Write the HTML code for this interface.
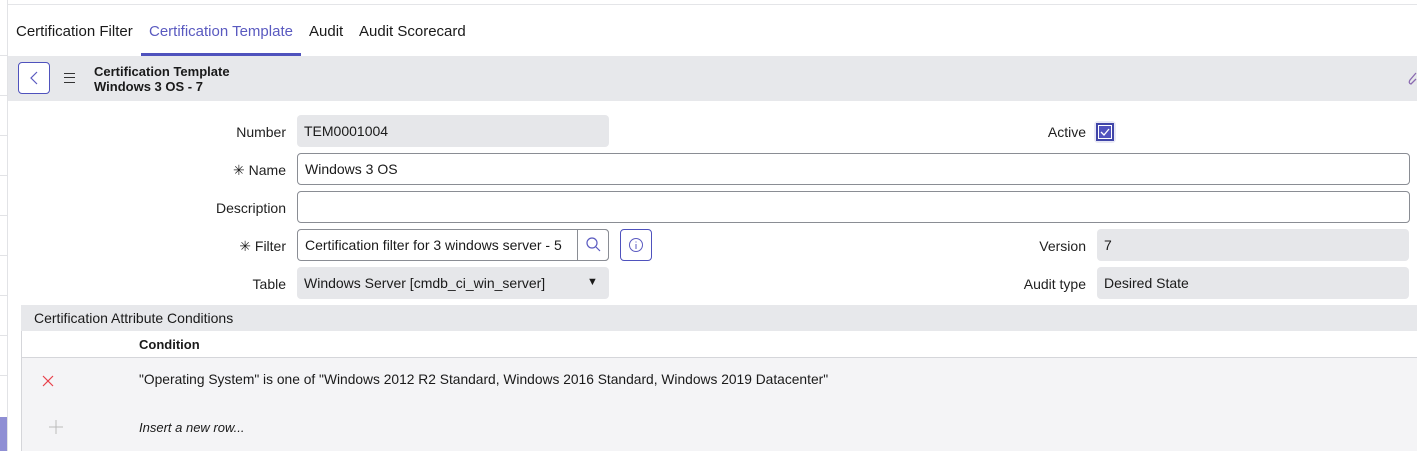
<!DOCTYPE html>
<html><head><style>
body{margin:0;width:1417px;height:451px;overflow:hidden;background:#fff;font-family:"Liberation Sans",sans-serif;position:relative;color:#1a1a1a}
.a{position:absolute}
.lbl{position:absolute;font-size:14px;text-align:right;color:#1f1f1f}
.in{position:absolute;box-sizing:border-box;border-radius:4px;font-size:14px;padding:0 7px;display:flex;align-items:center}
.ro{background:#e6e7ea}
.ed{border:1px solid #8a8d94;background:#fff}
.ln{position:absolute;left:0;width:7px;height:1px;background:#e2e3e6}
</style></head><body>
<div class="a" style="left:7px;top:0;width:1410px;height:4px;border-bottom:1px solid #e4e5e8"></div>
<div class="a" style="left:0;top:0;width:7px;height:451px;border-right:1px solid #e2e3e6;background:#fff"></div>
<div class="ln" style="top:55px"></div><div class="ln" style="top:95px"></div><div class="ln" style="top:135px"></div><div class="ln" style="top:175px"></div><div class="ln" style="top:215px"></div><div class="ln" style="top:255px"></div><div class="ln" style="top:295px"></div><div class="ln" style="top:335px"></div><div class="ln" style="top:375px"></div>
<div class="a" style="left:0;top:417px;width:7px;height:34px;background:#8f8fd4"></div>

<div class="a" style="left:16px;top:23px;font-size:15px">Certification Filter</div>
<div class="a" style="left:149px;top:23px;font-size:15px;color:#5a5ac0">Certification Template</div>
<div class="a" style="left:141px;top:53px;width:160px;height:3px;background:#4f52bd"></div>
<div class="a" style="left:309px;top:23px;font-size:15px">Audit</div>
<div class="a" style="left:359px;top:23px;font-size:15px">Audit Scorecard</div>

<div class="a" style="left:8px;top:56px;width:1409px;height:45px;background:#e7e8eb"></div>
<div class="a" style="left:18px;top:62px;width:32px;height:32px;box-sizing:border-box;border:1px solid #4f52bd;border-radius:4px;background:#fff"><svg width="30" height="30"><path d="M18 9 L12 15 L18 21" stroke="#5a5ac0" fill="none" stroke-width="1.2"/></svg></div>
<div class="a" style="left:64px;top:73px;width:11px;height:8px;border-top:1px solid #333;border-bottom:1px solid #333"><div style="margin-top:3px;height:1px;background:#333"></div></div>
<div class="a" style="left:94px;top:64px;font-size:13px;font-weight:bold;line-height:15px">Certification Template<br>Windows 3 OS - 7</div>
<svg class="a" style="left:1408px;top:70px" width="9" height="16"><path d="M8 3 L2 10 Q0 13 3 14 L8 9" stroke="#8a6ab0" fill="none" stroke-width="1.3"/></svg>

<div class="lbl" style="left:150px;width:136px;top:124px">Number</div>
<div class="in ro" style="left:297px;top:115px;width:312px;height:32px">TEM0001004</div>
<div class="lbl" style="left:950px;width:136px;top:124px">Active</div>
<div class="a" style="left:1094px;top:121px;width:22px;height:22px;border-radius:4px;background:#e8e8f5"></div>
<div class="a" style="left:1096px;top:123px;width:18px;height:18px;box-sizing:border-box;background:#5052be;border:2px solid #4045a8;outline:1px solid #fff;outline-offset:-3px"><svg width="14" height="14" style="position:absolute;left:0;top:0"><path d="M3 7 L6 10 L11 4" stroke="#fff" fill="none" stroke-width="1.3"/></svg></div>

<div class="lbl" style="left:150px;width:136px;top:162px">✳ Name</div>
<div class="in ed" style="left:297px;top:153px;width:1113px;height:32px">Windows 3 OS</div>
<div class="lbl" style="left:150px;width:136px;top:200px">Description</div>
<div class="in ed" style="left:297px;top:191px;width:1113px;height:32px"></div>

<div class="lbl" style="left:150px;width:136px;top:238px">✳ Filter</div>
<div class="in ed" style="left:297px;top:229px;width:312px;height:32px">Certification filter for 3 windows server - 5</div>
<div class="a" style="left:577px;top:229px;width:32px;height:32px;box-sizing:border-box;border:1px solid #8a8d94;border-radius:0 4px 4px 0;background:#fff"><svg width="30" height="30"><circle cx="14" cy="13" r="5" stroke="#5a5ac0" fill="none" stroke-width="1.2"/><path d="M18 17 L22 21" stroke="#5a5ac0" stroke-width="1.2"/></svg></div>
<div class="a" style="left:620px;top:229px;width:32px;height:32px;box-sizing:border-box;border:1px solid #4f52bd;border-radius:4px"><svg width="30" height="30"><circle cx="15" cy="15" r="6.5" stroke="#5a5ac0" fill="none"/><path d="M15 14 V19 M15 11.5 V12.5" stroke="#5a5ac0"/></svg></div>
<div class="lbl" style="left:950px;width:136px;top:238px">Version</div>
<div class="in ro" style="left:1097px;top:229px;width:312px;height:32px">7</div>

<div class="lbl" style="left:150px;width:136px;top:276px">Table</div>
<div class="in ro" style="left:297px;top:267px;width:312px;height:32px">Windows Server [cmdb_ci_win_server]<span style="position:absolute;left:290px;top:9px;font-size:11px">▼</span></div>
<div class="lbl" style="left:950px;width:136px;top:276px">Audit type</div>
<div class="in ro" style="left:1097px;top:267px;width:312px;height:32px">Desired State</div>

<div class="a" style="left:21px;top:305px;width:1396px;height:26px;background:#e7e8eb"></div>
<div class="a" style="left:34px;top:310px;font-size:14px">Certification Attribute Conditions</div>
<div class="a" style="left:21px;top:331px;width:1396px;height:120px;box-sizing:border-box;border-left:1px solid #d5d6da;background:#f4f4f6"></div>
<div class="a" style="left:22px;top:331px;width:1395px;height:26px;background:#fff;border-bottom:1px solid #d5d6da"></div>
<div class="a" style="left:139px;top:337px;font-size:13px;font-weight:bold">Condition</div>
<svg class="a" style="left:42px;top:375px" width="12" height="12"><path d="M1 1 L11 11 M11 1 L1 11" stroke="#e8404a" stroke-width="1.2"/></svg>
<div class="a" style="left:139px;top:372px;font-size:13.8px">"Operating System" is one of "Windows 2012 R2 Standard, Windows 2016 Standard, Windows 2019 Datacenter"</div>
<svg class="a" style="left:49px;top:420px" width="14" height="14"><path d="M7 0 V14 M0 7 H14" stroke="#bbb" stroke-width="1"/></svg>
<div class="a" style="left:139px;top:420px;font-size:13px;font-style:italic">Insert a new row...</div>
</body></html>
